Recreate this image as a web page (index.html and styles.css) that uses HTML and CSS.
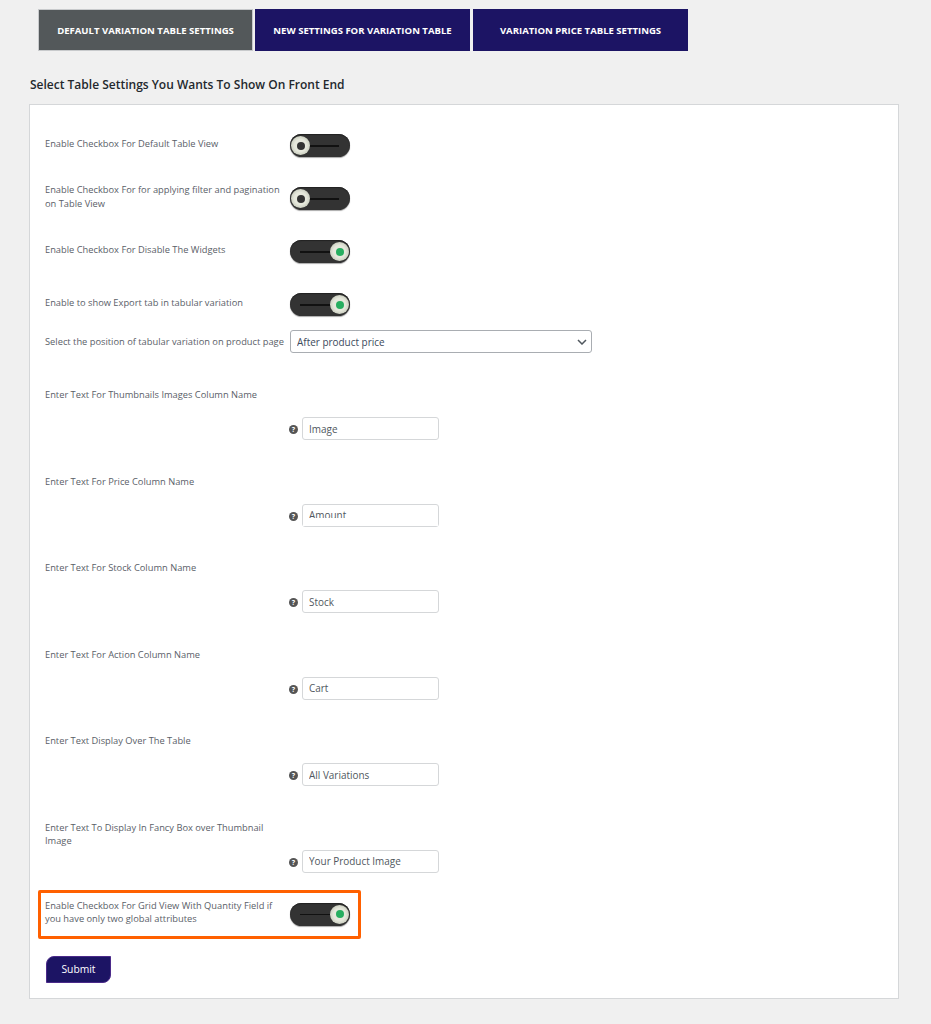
FILE: index.html
```html
<!DOCTYPE html>
<html lang="en">
<head>
    <meta charset="UTF-8">
    <meta name="viewport" content="width=device-width, initial-scale=1.0">
    <title>Variation Table Settings</title>
    <link rel="stylesheet" href="styles.css">
</head>
<body>
    <div class="tabs">
        <a class="tab active">DEFAULT VARIATION TABLE SETTINGS</a>
        <a class="tab">NEW SETTINGS FOR VARIATION TABLE</a>
        <a class="tab">VARIATION PRICE TABLE SETTINGS</a>
    </div>

    <h2 class="page-title">Select Table Settings You Wants To Show On Front End</h2>

    <form class="panel">
        <div class="row toggle-row">
            <label>Enable Checkbox For Default Table View</label>
            <span class="switch"><span class="line"></span><span class="knob"></span></span>
        </div>
        <div class="row toggle-row">
            <label>Enable Checkbox For for applying filter and pagination on Table View</label>
            <span class="switch"><span class="line"></span><span class="knob"></span></span>
        </div>
        <div class="row toggle-row">
            <label>Enable Checkbox For Disable The Widgets</label>
            <span class="switch on"><span class="line"></span><span class="knob"></span></span>
        </div>
        <div class="row toggle-row last-toggle">
            <label>Enable to show Export tab in tabular variation</label>
            <span class="switch on"><span class="line"></span><span class="knob"></span></span>
        </div>

        <div class="row select-row">
            <label>Select the position of tabular variation on product page</label>
            <div class="select-wrap">
                <select>
                    <option>After product price</option>
                </select>
                <svg class="chevron" width="10" height="6" viewBox="0 0 10 6"><path d="M1 1l4 4 4-4" fill="none" stroke="#50575e" stroke-width="1.5"/></svg>
            </div>
        </div>

        <div class="row text-row">
            <label>Enter Text For Thumbnails Images Column Name</label>
            <div class="field"><span class="help">?</span><input type="text" value="Image"></div>
        </div>
        <div class="row text-row">
            <label>Enter Text For Price Column Name</label>
            <div class="field"><span class="help">?</span><div class="input-wrap"><input type="text" value="Amount"><span class="text-mask"></span></div></div>
        </div>
        <div class="row text-row">
            <label>Enter Text For Stock Column Name</label>
            <div class="field"><span class="help">?</span><input type="text" value="Stock"></div>
        </div>
        <div class="row text-row">
            <label>Enter Text For Action Column Name</label>
            <div class="field"><span class="help">?</span><input type="text" value="Cart"></div>
        </div>
        <div class="row text-row">
            <label>Enter Text Display Over The Table</label>
            <div class="field"><span class="help">?</span><input type="text" value="All Variations"></div>
        </div>
        <div class="row text-row last-text">
            <label>Enter Text To Display In Fancy Box over Thumbnail Image</label>
            <div class="field"><span class="help">?</span><input type="text" value="Your Product Image"></div>
        </div>

        <div class="highlight">
            <div class="row">
                <label>Enable Checkbox For Grid View With Quantity Field if you have only two global attributes</label>
                <span class="switch on"><span class="line"></span><span class="knob"></span></span>
            </div>
        </div>

        <button type="button" class="submit-btn">Submit</button>
    </form>
</body>
</html>
```

FILE: styles.css
```css
* {
    box-sizing: border-box;
}
body {
    margin: 0;
    height: 1024px;
    overflow: hidden;
    background: #f0f0f0;
    font-family: "Open Sans", "Noto Sans", sans-serif;
    font-size: 9.3px;
    color: #5a6068;
}

/* tabs */
.tabs {
    display: flex;
    padding: 9px 0 0 38px;
}
.tab {
    width: 215px;
    height: 42px;
    margin-right: 2px;
    display: flex;
    align-items: center;
    justify-content: center;
    background: #1c1464;
    color: #fff;
    font-weight: 700;
    font-size: 9.55px;
}
.tab:last-child {
    margin-left: 1px;
}
.tab.active {
    background: #53585a;
    border: 1px solid #c8cacc;
}

.page-title {
    margin: 25px 0 0 30px;
    height: 17px;
    font-size: 12px;
    line-height: 17px;
    font-weight: 600;
    color: #23282d;
}

/* main box */
.panel {
    margin: 11px 32px 0 29px;
    height: 895px;
    padding: 29px 0 0 15px;
    background: #fff;
    border: 1px solid #d5d7d9;
}
.row {
    display: grid;
    grid-template-columns: 243px auto;
    justify-content: start;
    align-items: center;
    column-gap: 2px;
}
.row label {
    line-height: 13.5px;
}
.toggle-row {
    margin-bottom: 30px;
}
.toggle-row.last-toggle {
    margin-bottom: 14px;
}
/* labels sit above the switch centre */
.toggle-row label,
.highlight label {
    margin: -4px 0 0;
}
.select-row label {
    padding-top: 1px;
}

/* switch */
.switch {
    position: relative;
    display: block;
    width: 60px;
    height: 23px;
    border-radius: 12px;
    background: #333;
    box-shadow: inset 0 1px 1px #222, 0 1px 1px #aaa;
}
.switch .line {
    position: absolute;
    left: 10px;
    right: 11px;
    top: 11px;
    height: 1.5px;
    background: #111;
}
.switch .knob {
    position: absolute;
    left: 1px;
    top: 2px;
    width: 19px;
    height: 19px;
    border-radius: 50%;
    background: radial-gradient(circle, #e6e8dc 45%, #aeb4a3 100%);
}
.switch .knob::after {
    content: "";
    position: absolute;
    left: 5.5px;
    top: 5.5px;
    width: 8px;
    height: 8px;
    border-radius: 50%;
    background: #333;
}
.switch.on .knob {
    left: 40px;
}
.switch.on .knob::after {
    background: #27ae60;
}

/* select */
.select-row {
    height: 23px;
}
.select-wrap {
    position: relative;
    width: 302px;
}
.select-wrap select {
    display: block;
    width: 100%;
    height: 23px;
    padding: 0 20px 0 6px;
    appearance: none;
    background: #fff;
    border: 1px solid #a9adb2;
    border-radius: 3px;
    font-family: inherit;
    font-size: 9.95px;
    color: #3c4a5c;
}
.chevron {
    position: absolute;
    right: 5px;
    top: 9px;
}

/* text inputs */
.text-row {
    align-items: start;
    height: 86.6px;
}
.text-row.last-text {
    height: 77px;
}
.select-row + .text-row {
    margin-top: 27px;
}
.text-row label {
    padding-top: 8px;
}
.field {
    display: flex;
    align-items: center;
    margin-top: 37px;
    margin-left: -1px;
}
.help {
    width: 9px;
    height: 9px;
    margin: 2px 4px 0 0;
    display: flex;
    align-items: center;
    justify-content: center;
    border-radius: 50%;
    background: #555;
    color: #fff;
    font-size: 7px;
    font-weight: 700;
}
.field input {
    display: block;
    width: 137px;
    height: 23px;
    padding: 0 6px;
    background: #fff;
    border: 1px solid #d5d7d9;
    border-radius: 3px;
    font-family: inherit;
    font-size: 9.95px;
    color: #50575e;
}
.input-wrap {
    position: relative;
}
/* bottom of this value is cut off in the original */
.text-mask {
    position: absolute;
    left: 1px;
    right: 1px;
    bottom: 1px;
    height: 8px;
    background: #fff;
}

/* orange box */
.highlight {
    width: 323px;
    height: 49px;
    margin-left: -7px;
    padding: 10px 0 0 4px;
    border: 3px solid #ff6000;
    border-radius: 2px;
}
.highlight .row {
    height: 23px;
}

.submit-btn {
    display: block;
    width: 65px;
    height: 27px;
    margin: 17px 0 0 1px;
    padding: 0;
    background: #1c1464;
    border: 1px solid #4b2a8a;
    border-radius: 8px 0 8px 0;
    color: #fff;
    font-family: inherit;
    font-size: 10.3px;
}
```
